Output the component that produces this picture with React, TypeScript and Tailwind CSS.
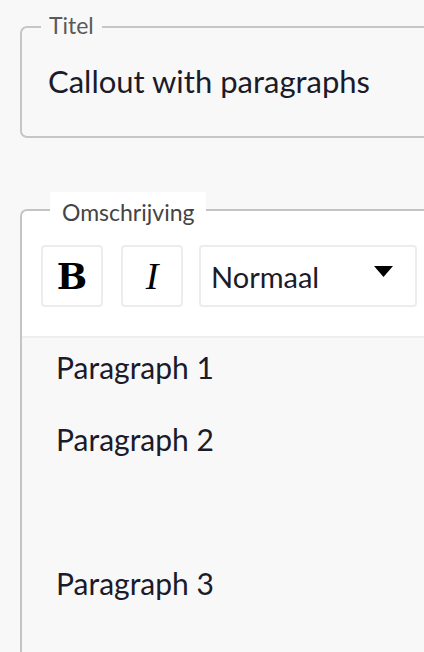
import React from "react";

const sans = { fontFamily: '"Lato", "Noto Sans", sans-serif' };

export default function App() {
  return (
    <div
      className="w-[424px] h-[652px] overflow-hidden bg-[#f8f8f8] pt-[10px] font-['Lato',_'Noto_Sans',_sans-serif]"
      style={sans}
    >
      <fieldset className="ml-[20px] w-[440px] border-2 border-[#c6c6c6] rounded-[7px] p-0 m-0 min-w-0">
        <legend className="ml-[19px] px-2 pb-[4px] text-[23px] leading-[30px] text-[#5a5a5a]">
          Titel
        </legend>
        <div className="h-[92px] pl-[26px] pt-[17px] text-[31px] leading-[40px] text-[#1b1b29]">
          Callout with paragraphs
        </div>
      </fieldset>

      <fieldset className="mt-[54px] ml-[20px] w-[440px] h-[600px] border-2 border-[#c4c4c4] rounded-[7px] p-0 min-w-0 bg-white">
        <legend className="ml-[28px] px-3 pt-[5px] pb-[1px] bg-white text-[23px] leading-[30px] text-[#444444]">
          Omschrijving
        </legend>
        <div className="flex items-start bg-white pl-[19px] pt-[17px] pb-[29px] border-b-2 border-[#eeeeee]">
          <button className="w-[62px] h-[62px] flex items-center justify-center border-2 border-[#ececec] rounded-[4px] bg-white">
            <span className="font-['DejaVu_Serif',_serif] font-bold text-[36px] leading-none text-black">
              B
            </span>
          </button>
          <button className="ml-[18px] w-[62px] h-[62px] flex items-center justify-center border-2 border-[#ececec] rounded-[4px] bg-white">
            <span className="font-['Liberation_Serif',_serif] italic text-[38px] leading-none text-black">
              I
            </span>
          </button>
          <div className="ml-[16px] w-[218px] h-[62px] flex items-center justify-between border-2 border-[#ececec] rounded-[4px] bg-white pl-[10px] pr-[22px]">
            <span className="text-[29px] leading-none text-[#1b1b29]">Normaal</span>
            <svg width="19" height="11" viewBox="0 0 19 11" className="mb-[9px]">
              <polygon points="0,0 19,0 9.5,11" fill="#000" />
            </svg>
          </div>
        </div>
        <div className="bg-[#f8f8f8] h-full pl-[34px] pt-[5px] flex flex-col gap-[24px] text-[30px] leading-[48px] text-[#1b1b29]">
          <p className="h-[48px]">Paragraph 1</p>
          <p className="h-[48px]">Paragraph 2</p>
          <p className="h-[48px]">
            <br />
          </p>
          <p className="h-[48px]">Paragraph 3</p>
        </div>
      </fieldset>
    </div>
  );
}
